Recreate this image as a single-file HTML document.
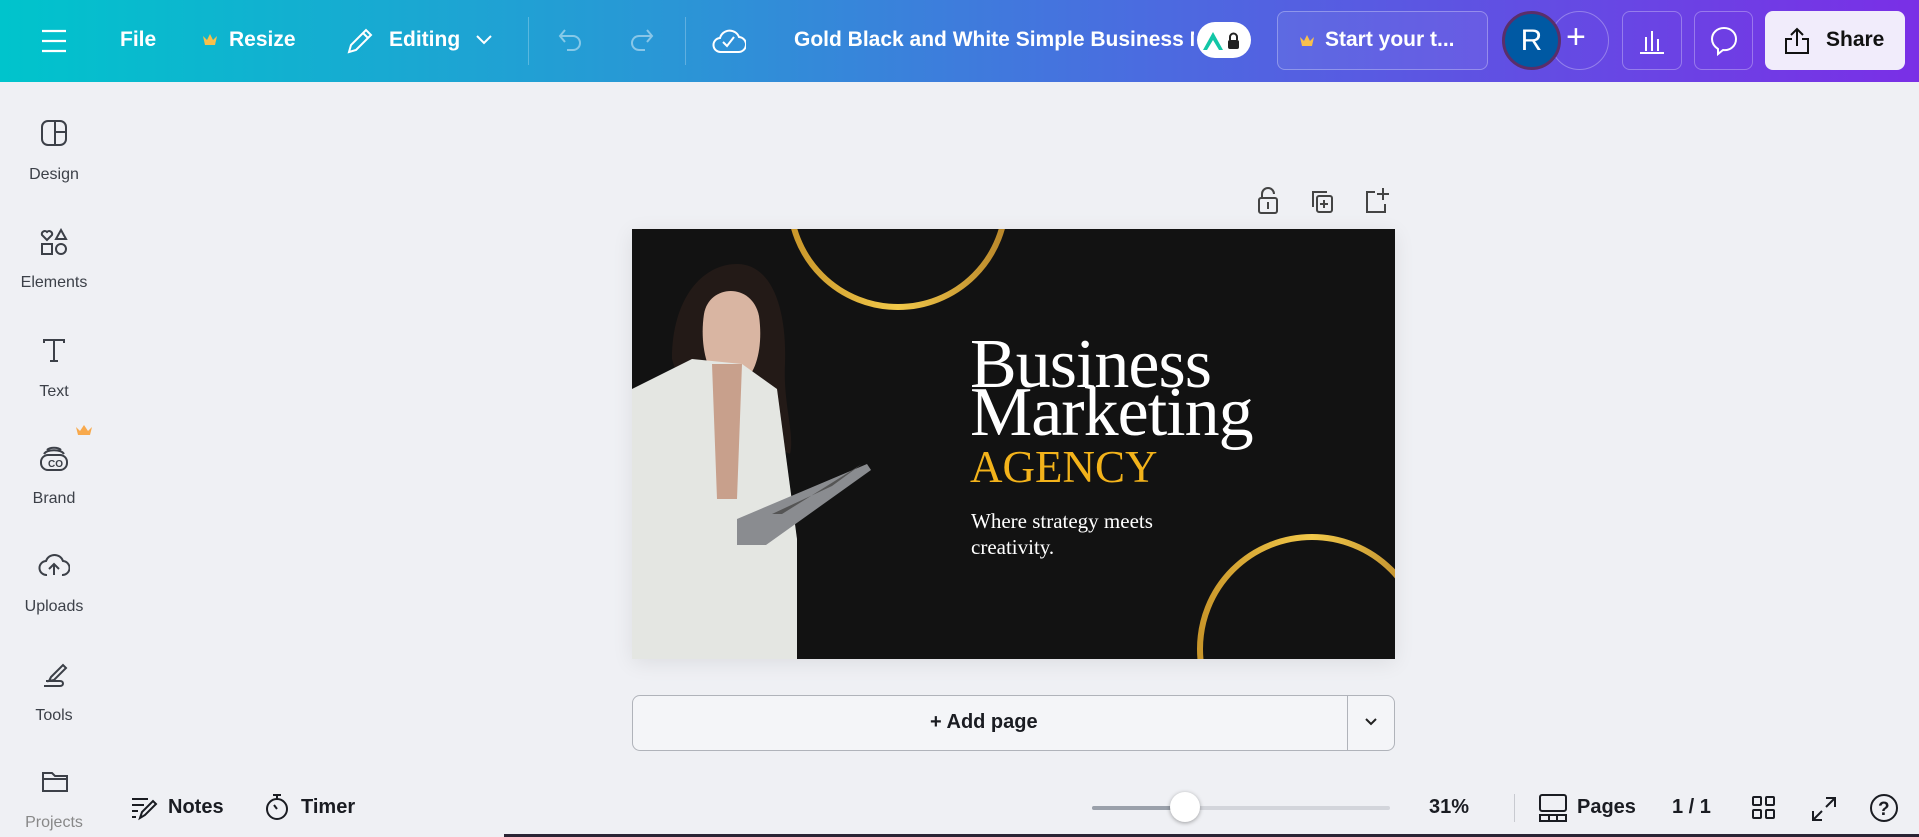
<!DOCTYPE html>
<html><head><meta charset="utf-8"><style>
*{box-sizing:border-box;margin:0;padding:0}
body{width:1919px;height:837px;overflow:hidden;background:#eff0f4;font-family:"Liberation Sans",sans-serif;position:relative}
.top{position:absolute;left:0;top:0;width:1919px;height:82px;background:linear-gradient(90deg,#00c4cc 0%,#2a96d6 35%,#4b6be0 60%,#7a2fe6 100%)}
.t{position:absolute;color:#fff;font-weight:bold;font-size:21px;top:28px;white-space:nowrap}
.ab{position:absolute}
.side{position:absolute;left:0;width:108px;text-align:center;font-size:16px;color:#3c4048}
.bt{position:absolute;top:796px;font-size:20px;color:#1a1c22;font-weight:bold}
</style></head><body>
<div class="top">
<svg class="ab" style="left:40px;top:28px" width="28" height="26"><g stroke="#fff" stroke-width="2.2"><line x1="2" y1="3" x2="26" y2="3"/><line x1="2" y1="13" x2="26" y2="13"/><line x1="2" y1="23" x2="26" y2="23"/></g></svg>
<div class="t" style="left:120px">File</div>
<svg class="ab" style="left:202px;top:32px" width="16" height="16"><path d="M1 4l4 4 3-6 3 6 4-4-2 9H3z" fill="#f8c04c"/></svg>
<div class="t" style="left:229px">Resize</div>
<svg class="ab" style="left:345px;top:26px" width="30" height="30"><path d="M4 26l2-7L21 4l5 5L11 24z M18 7l5 5" fill="none" stroke="#fff" stroke-width="2"/></svg>
<div class="t" style="left:389px">Editing</div>
<svg class="ab" style="left:475px;top:34px" width="18" height="12"><path d="M2 2l7 7 7-7" fill="none" stroke="#fff" stroke-width="2"/></svg>
<div class="ab" style="left:528px;top:17px;width:1px;height:48px;background:rgba(255,255,255,.25)"></div>
<svg class="ab" style="left:557px;top:27px" width="28" height="26"><path d="M8 3L3 9l5 6 M3 9h13a7 7 0 010 14h-6" fill="none" stroke="rgba(255,255,255,.45)" stroke-width="2"/></svg>
<svg class="ab" style="left:627px;top:27px" width="28" height="26"><path d="M20 3l5 6-5 6 M25 9H12a7 7 0 000 14h6" fill="none" stroke="rgba(255,255,255,.45)" stroke-width="2"/></svg>
<div class="ab" style="left:685px;top:17px;width:1px;height:48px;background:rgba(255,255,255,.25)"></div>
<svg class="ab" style="left:712px;top:24px" width="34" height="32"><path d="M9 28a7 7 0 01-1-14 10 10 0 0119-1 7 7 0 01-1 15z" fill="none" stroke="#fff" stroke-width="2"/><path d="M11 18l4 4 7-9" fill="none" stroke="#fff" stroke-width="2"/></svg>
<div class="t" style="left:794px;width:400px;overflow:hidden">Gold Black and White Simple Business Marketing</div>
<div class="ab" style="left:1197px;top:22px;width:54px;height:36px;border-radius:18px;background:#fff"></div>
<svg class="ab" style="left:1201px;top:28px" width="46" height="24"><path d="M2 22L12 4l10 18-4 0-6-10-6 10z" fill="#12c6a6"/><rect x="27" y="12" width="11" height="9" rx="2" fill="#222"/><path d="M29 12v-3a3.5 3.5 0 017 0v3" fill="none" stroke="#222" stroke-width="2"/></svg>
<div class="ab" style="left:1277px;top:11px;width:211px;height:59px;border:1px solid rgba(255,255,255,.3);border-radius:8px;background:rgba(255,255,255,.06)"></div>
<svg class="ab" style="left:1299px;top:33px" width="16" height="16"><path d="M1 4l4 4 3-6 3 6 4-4-2 9H3z" fill="#f8c04c"/></svg>
<div class="t" style="left:1325px">Start your t...</div>
<div class="ab" style="left:1550px;top:11px;width:59px;height:59px;border-radius:50%;border:1px solid rgba(255,255,255,.3)"></div>
<div class="ab" style="left:1502px;top:11px;width:59px;height:59px;border-radius:50%;background:#0059a3;border:3px solid #5a2e6a;color:#fff;font-size:30px;text-align:center;line-height:53px">R</div>
<div class="ab" style="left:1566px;top:18px;color:#fff;font-size:34px;font-weight:300">+</div>
<div class="ab" style="left:1622px;top:11px;width:60px;height:59px;border:1px solid rgba(255,255,255,.3);border-radius:8px"></div>
<svg class="ab" style="left:1638px;top:27px" width="28" height="28"><g stroke="#fff" stroke-width="2"><line x1="2" y1="26" x2="26" y2="26"/><line x1="8" y1="10" x2="8" y2="24"/><line x1="14" y1="4" x2="14" y2="24"/><line x1="20" y1="12" x2="20" y2="24"/></g></svg>
<div class="ab" style="left:1694px;top:11px;width:59px;height:59px;border:1px solid rgba(255,255,255,.3);border-radius:8px"></div>
<svg class="ab" style="left:1708px;top:25px" width="32" height="32"><path d="M16 3C9 3 4 8 4 14c0 5 3 8 6 10v5l5-4c7 1 13-4 13-11 0-6-5-11-12-11z" fill="none" stroke="#fff" stroke-width="2"/></svg>
<div class="ab" style="left:1765px;top:11px;width:140px;height:59px;border-radius:8px;background:#f1ecfb"></div>
<svg class="ab" style="left:1782px;top:26px" width="30" height="30"><path d="M15 20V3 M9 9l6-6 6 6 M10 13H4v14h22V13h-6" fill="none" stroke="#111" stroke-width="2"/></svg>
<div class="t" style="left:1826px;color:#111">Share</div>
</div>

<svg class="ab" style="left:40px;top:119px" width="28" height="28"><rect x="2" y="2" width="24" height="24" rx="6" fill="none" stroke="#3c4048" stroke-width="2"/><path d="M15 2v24 M15 13h11" stroke="#3c4048" stroke-width="2"/></svg>
<div class="side" style="top:166px">Design</div>
<svg class="ab" style="left:40px;top:228px" width="30" height="28"><g fill="none" stroke="#3c4048" stroke-width="2"><path d="M7 12L2 7a3 3 0 015-3 3 3 0 015 3z"/><path d="M21 2l5 9h-10z"/><rect x="2" y="16" width="10" height="10"/><circle cx="21" cy="21" r="5"/></g></svg>
<div class="side" style="top:274px">Elements</div>
<svg class="ab" style="left:41px;top:337px" width="26" height="26"><path d="M3 6V3h20v3 M13 3v21 M9 24h8" fill="none" stroke="#3c4048" stroke-width="2"/></svg>
<div class="side" style="top:383px">Text</div>
<svg class="ab" style="left:75px;top:423px" width="18" height="14"><path d="M1 4l4 4 4-6 4 6 4-4-2 8H3z" fill="#f8a94c"/></svg>
<svg class="ab" style="left:39px;top:444px" width="30" height="28"><g fill="none" stroke="#3c4048" stroke-width="2"><rect x="2" y="11" width="26" height="15" rx="7"/><path d="M5 10c3-5 17-5 20 0 M8 6c3-3 11-3 14 0"/></g><text x="9" y="23" font-size="10" font-weight="bold" fill="#3c4048" font-family="Liberation Sans">CO</text></svg>
<div class="side" style="top:490px">Brand</div>
<svg class="ab" style="left:38px;top:552px" width="32" height="26"><path d="M9 23a7 7 0 01-1-14 9 9 0 0117 0 7 7 0 01-1 14 M11 17l5-5 5 5 M16 12v11" fill="none" stroke="#3c4048" stroke-width="2"/></svg>
<div class="side" style="top:598px">Uploads</div>
<svg class="ab" style="left:40px;top:660px" width="30" height="28"><path d="M4 26h16c4 0 4-5 0-5H6 M11 17l12-12 3 3-12 12-5 1z" fill="none" stroke="#3c4048" stroke-width="2"/></svg>
<div class="side" style="top:707px">Tools</div>
<svg class="ab" style="left:40px;top:768px" width="30" height="26"><path d="M3 5h9l3 3h12v15H3z M3 11h24" fill="none" stroke="#3c4048" stroke-width="2"/></svg>
<div class="side" style="top:814px;color:#888">Projects</div>

<svg class="ab" style="left:1256px;top:186px" width="24" height="30"><rect x="3" y="12" width="18" height="15" rx="2" fill="none" stroke="#444" stroke-width="2"/><path d="M6 12V8a6 6 0 0112 0" fill="none" stroke="#444" stroke-width="2"/><path d="M12 16v7" stroke="#444" stroke-width="2"/></svg>
<svg class="ab" style="left:1309px;top:189px" width="26" height="26"><g fill="none" stroke="#444" stroke-width="2"><path d="M4 18V3h14"/><rect x="8" y="7" width="15" height="16" rx="2"/><path d="M15 11v8 M11 15h8"/></g></svg>
<svg class="ab" style="left:1363px;top:186px" width="28" height="28"><path d="M12 6H4v20h18v-8 M20 2v12 M14 8h12" fill="none" stroke="#444" stroke-width="2"/></svg>

<div class="ab" style="left:632px;top:229px;width:763px;height:430px;background:#121212;overflow:hidden;box-shadow:0 4px 20px rgba(0,0,0,.08)">
<svg width="763" height="430" style="position:absolute;left:0;top:0">
<defs><linearGradient id="g" x1="0" x2="1"><stop offset="0" stroke="none" stop-color="#c9962a"/><stop offset=".5" stop-color="#f2c94a"/><stop offset="1" stop-color="#b8862a"/></linearGradient></defs>
<circle cx="266" cy="-30" r="108" fill="none" stroke="url(#g)" stroke-width="6"/>
<circle cx="680" cy="420" r="112" fill="none" stroke="url(#g)" stroke-width="6"/>
<path d="M40 130c0-60 30-95 65-95 35 0 50 45 48 100-2 40 10 70 5 90l-30-15-70-20z" fill="#231a17"/>
<path d="M72 85c5-30 48-32 55 2 5 35-5 70-28 70s-32-40-27-72z" fill="#d9b5a2"/>
<path d="M0 160l60-30 50 5 35 25 20 150 0 120H0z" fill="#e4e6e2"/>
<path d="M80 135h30l-5 135-20 0z" fill="#c8a08c"/>
<path d="M105 290l130-55 4 6-105 75-29 0z" fill="#8a8c90"/>
<path d="M140 285l60-28 30-22-80 50z" fill="#555"/>
</svg>
<div class="ab" style="left:338px;top:112px;color:#fff;font-family:'Liberation Serif',serif;font-size:70px;line-height:48px;letter-spacing:-1px">Business<br>Marketing</div>
<div class="ab" style="left:338px;top:214px;color:#f3b31b;font-family:'Liberation Serif',serif;font-size:45px;line-height:48px">AGENCY</div>
<div class="ab" style="left:339px;top:279px;color:#fff;font-family:'Liberation Serif',serif;font-size:21px;line-height:26px">Where strategy meets<br>creativity.</div>
</div>

<div class="ab" style="left:632px;top:695px;width:763px;height:56px;border:1px solid #b0b3ba;border-radius:8px;background:#f4f5f8"></div>
<div class="ab" style="left:1347px;top:696px;width:1px;height:54px;background:#b0b3ba"></div>
<svg class="ab" style="left:1363px;top:716px" width="16" height="12"><path d="M3 3l5 5 5-5" fill="none" stroke="#222" stroke-width="2"/></svg>
<div class="ab" style="left:930px;top:711px;font-size:20px;font-weight:bold;color:#1a1c22">+ Add page</div>

<svg class="ab" style="left:130px;top:795px" width="28" height="26"><g stroke="#1a1c22" stroke-width="2" fill="none"><path d="M2 4h16 M2 10h12 M2 16h6 M2 22h4 M10 23l2-6 11-11 3 3-11 11z"/></g></svg>
<div class="bt" style="left:168px">Notes</div>
<svg class="ab" style="left:263px;top:792px" width="28" height="30"><g stroke="#1a1c22" stroke-width="2" fill="none"><circle cx="14" cy="17" r="10"/><path d="M10 3h8 M14 3v4 M14 17l-3-4"/></g></svg>
<div class="bt" style="left:301px">Timer</div>
<div class="ab" style="left:1092px;top:806px;width:298px;height:4px;border-radius:2px;background:#d3d5db"></div>
<div class="ab" style="left:1092px;top:806px;width:93px;height:4px;border-radius:2px;background:#9aa0aa"></div>
<div class="ab" style="left:1170px;top:792px;width:30px;height:30px;border-radius:50%;background:#fff;box-shadow:0 1px 4px rgba(0,0,0,.35)"></div>
<div class="bt" style="left:1429px">31%</div>
<div class="ab" style="left:1514px;top:794px;width:1px;height:28px;background:#c8cad0"></div>
<svg class="ab" style="left:1538px;top:793px" width="30" height="30"><g stroke="#1a1c22" stroke-width="2" fill="none"><rect x="2" y="2" width="26" height="16" rx="2"/><rect x="2" y="22" width="26" height="6"/><path d="M11 22v6 M19 22v6"/></g></svg>
<div class="bt" style="left:1577px">Pages</div>
<div class="bt" style="left:1672px">1 / 1</div>
<svg class="ab" style="left:1751px;top:795px" width="26" height="26"><g stroke="#1a1c22" stroke-width="2" fill="none"><rect x="2" y="2" width="8" height="8" rx="1"/><rect x="15" y="2" width="8" height="8" rx="1"/><rect x="2" y="15" width="8" height="8" rx="1"/><rect x="15" y="15" width="8" height="8" rx="1"/></g></svg>
<svg class="ab" style="left:1810px;top:795px" width="28" height="28"><path d="M16 3h9v9 M25 3l-9 9 M12 25H3v-9 M3 25l9-9" fill="none" stroke="#1a1c22" stroke-width="2"/></svg>
<svg class="ab" style="left:1868px;top:792px" width="32" height="32"><circle cx="16" cy="16" r="13" fill="none" stroke="#1a1c22" stroke-width="2"/><text x="10" y="23" font-size="19" font-weight="bold" font-family="Liberation Sans" fill="#1a1c22">?</text></svg>
<div class="ab" style="left:504px;top:834px;width:1415px;height:3px;background:#2a2434"></div>
</body></html>
